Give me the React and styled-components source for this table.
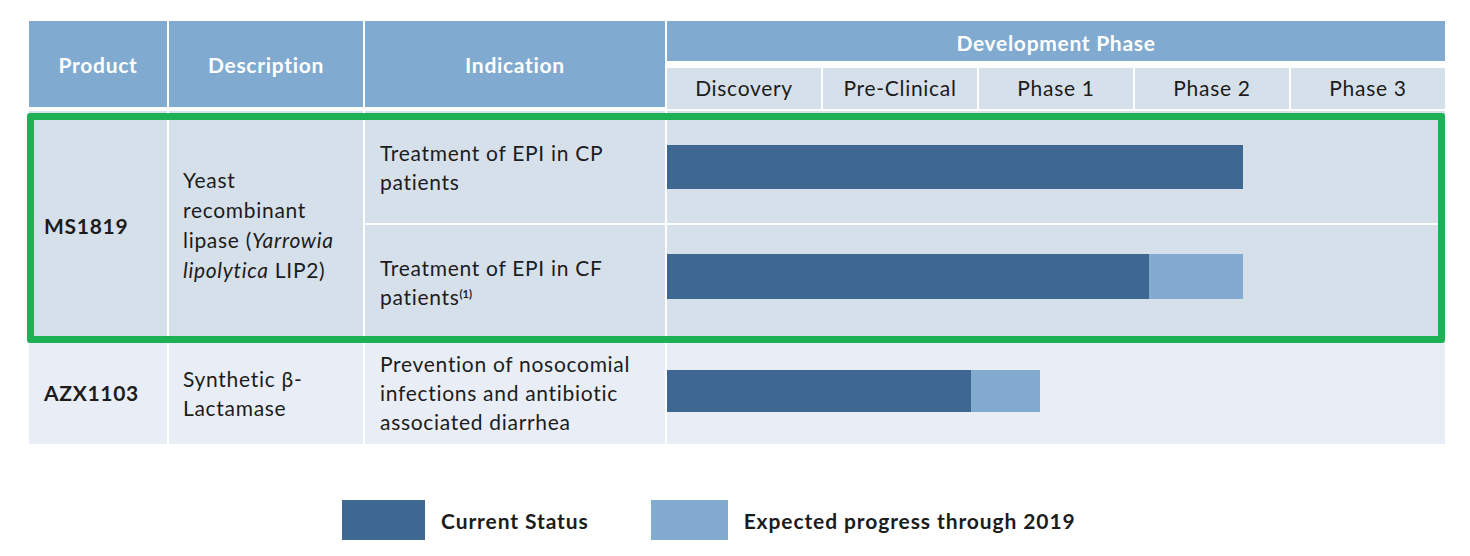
import React from "react";
import styled, { createGlobalStyle } from "styled-components";

const GlobalStyle = createGlobalStyle`
  body {
    margin: 0;
    background: #ffffff;
    font-family: Lato, "Open Sans", sans-serif;
    color: #1c1c1c;
    letter-spacing: 0.7px;
  }
`;

const Page = styled.div`
  padding: 21px 0 0 29px;
  width: 1416px;
`;

const Table = styled.div`
  position: relative;
  display: grid;
  grid-template-columns: 138px 194px 300px 778px;
  grid-template-rows: 88px 112px 115px 102px;
  gap: 2px;
`;

const HeadCell = styled.div`
  grid-row: 1;
  height: 86px;
  background: #80aacf;
  color: #ffffff;
  font-weight: 700;
  font-size: 21px;
  display: flex;
  align-items: center;
  justify-content: center;
`;

const PhaseHead = styled.div`
  grid-row: 1;
  display: flex;
  flex-direction: column;
  gap: 7px;
`;

const PhaseTitle = styled.div`
  height: 40px;
  padding-top: 3px;
  box-sizing: border-box;
  background: #80aacf;
  color: #ffffff;
  font-weight: 700;
  font-size: 21px;
  display: flex;
  align-items: center;
  justify-content: center;
`;

const StageRow = styled.div`
  display: grid;
  grid-template-columns: repeat(5, 1fr);
  gap: 2px;
  height: 41px;
`;

const Stage = styled.div`
  background: #d6e0eb;
  font-size: 21px;
  padding-bottom: 3px;
  box-sizing: border-box;
  display: flex;
  align-items: center;
  justify-content: center;
`;

const Cell = styled.div`
  grid-row: ${(p) => p.$row};
  background: ${(p) => (p.$alt ? "#e9eef6" : "#d6e0eb")};
  display: flex;
  align-items: center;
  padding-left: ${(p) => p.$pad || 15}px;
  padding-bottom: 1px;
  font-size: 21px;
  line-height: ${(p) => p.$lh || 29}px;
  font-weight: ${(p) => (p.$bold ? 700 : 400)};
`;

const Track = styled.div`
  grid-row: ${(p) => p.$row};
  background: ${(p) => (p.$alt ? "#e9eef6" : "#d6e0eb")};
  padding-top: ${(p) => p.$top}px;
`;

const Bar = styled.div`
  display: flex;
  height: ${(p) => p.$h}px;
`;

const Segment = styled.div`
  height: 100%;
  background: ${(p) => (p.$expected ? "#82abcf" : "#3e6891")};
`;

const Sup = styled.sup`
  font-size: 11px;
  font-weight: 700;
  letter-spacing: 0;
  vertical-align: 7px;
  line-height: 0;
`;

const Frame = styled.div`
  position: absolute;
  left: -2px;
  right: 0;
  top: 92px;
  height: 230px;
  box-sizing: border-box;
  border: 7px solid #1db055;
  border-radius: 3px;
  pointer-events: none;
`;

const Legend = styled.div`
  display: flex;
  align-items: center;
  margin: 56px 0 0 313px;
`;

const LegendItem = styled.div`
  display: flex;
  align-items: center;
  gap: 16px;
  margin-right: 62px;
  font-size: 21px;
  font-weight: 700;
  letter-spacing: 0.9px;
`;

const Swatch = styled.div`
  width: ${(p) => p.$w}px;
  height: 40px;
  background: ${(p) => (p.$expected ? "#82abcf" : "#3e6891")};
`;

const stages = ["Discovery", "Pre-Clinical", "Phase 1", "Phase 2", "Phase 3"];

const tracks = [
  { row: 2, top: 34, h: 44, current: 576, expected: 0 },
  { row: 3, top: 29, h: 45, current: 482, expected: 94 },
  { row: 4, top: 28, h: 42, current: 304, expected: 69, alt: true },
];

export default function App() {
  return (
    <Page>
      <GlobalStyle />
      <Table>
        <HeadCell>Product</HeadCell>
        <HeadCell>Description</HeadCell>
        <HeadCell>Indication</HeadCell>
        <PhaseHead>
          <PhaseTitle>Development Phase</PhaseTitle>
          <StageRow>
            {stages.map((s) => (
              <Stage key={s}>{s}</Stage>
            ))}
          </StageRow>
        </PhaseHead>

        <Cell $row="2 / 4" $bold>MS1819</Cell>
        <Cell $row="2 / 4" $pad={14} $lh={30}>
          <div>
            Yeast
            <br />
            recombinant
            <br />
            lipase (<i>Yarrowia</i>
            <br />
            <i>lipolytica</i> LIP2)
          </div>
        </Cell>
        <Cell $row={2}>
          <div>
            Treatment of EPI in CP
            <br />
            patients
          </div>
        </Cell>
        <Cell $row={3}>
          <div>
            Treatment of EPI in CF
            <br />
            patients<Sup>(1)</Sup>
          </div>
        </Cell>

        <Cell $row={4} $alt $bold>AZX1103</Cell>
        <Cell $row={4} $alt $pad={14}>
          <div>
            Synthetic β-
            <br />
            Lactamase
          </div>
        </Cell>
        <Cell $row={4} $alt>
          <div>
            Prevention of nosocomial
            <br />
            infections and antibiotic
            <br />
            associated diarrhea
          </div>
        </Cell>

        {tracks.map((t) => (
          <Track key={t.row} $row={t.row} $top={t.top} $alt={t.alt}>
            <Bar $h={t.h}>
              <Segment style={{ width: t.current }} />
              {t.expected > 0 && (
                <Segment $expected style={{ width: t.expected }} />
              )}
            </Bar>
          </Track>
        ))}

        <Frame />
      </Table>

      <Legend>
        <LegendItem>
          <Swatch $w={83} />
          Current Status
        </LegendItem>
        <LegendItem>
          <Swatch $w={77} $expected />
          Expected progress through 2019
        </LegendItem>
      </Legend>
    </Page>
  );
}
